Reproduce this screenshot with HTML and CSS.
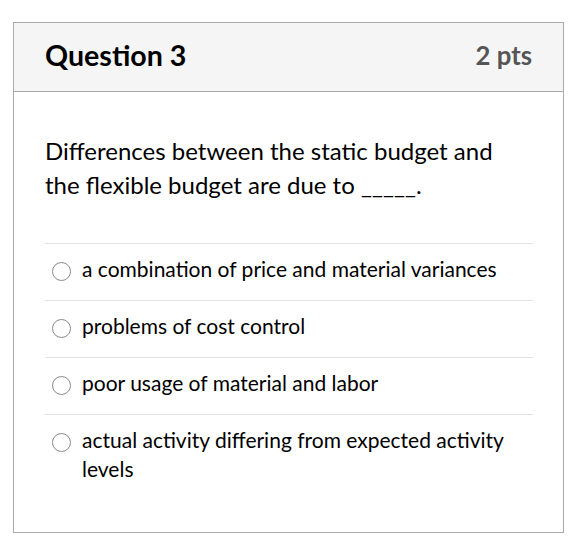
FILE: index.html
```html
<!DOCTYPE html>
<html>
<head>
<meta charset="utf-8">
<link rel="stylesheet" href="styles.css">
</head>
<body>
<div class="card">
  <div class="header">
    <h2 class="title">Question 3</h2>
    <div class="pts">2 pts</div>
  </div>
  <div class="content">
    <p class="question">Differences between the static budget and the flexible budget are due to _____.</p>
    <div class="answers">
      <label class="answer"><span class="radio"></span><span class="text">a combination of price and material variances</span></label>
      <label class="answer"><span class="radio"></span><span class="text">problems of cost control</span></label>
      <label class="answer"><span class="radio"></span><span class="text">poor usage of material and labor</span></label>
      <label class="answer"><span class="radio"></span><span class="text">actual activity differing from expected activity levels</span></label>
    </div>
  </div>
</div>
</body>
</html>
```
FILE: styles.css
```css
html, body {
  margin: 0;
  padding: 0;
  background: #fff;
}
body {
  font-family: Lato, "Liberation Sans", sans-serif;
  color: #000;
  padding: 22px 0 0 13px;
}
.card {
  width: 549px;
  height: 509px;
  border: 1px solid #aaaaaa;
}
.header {
  background: #f5f5f5;
  border-bottom: 1px solid #aaaaaa;
  height: 63px;
  display: flex;
  align-items: center;
  justify-content: space-between;
  padding: 0 31px 5px 31px;
}
.title {
  margin: 0;
  font-size: 28.6px;
  font-weight: 700;
  color: #000;
}
.pts {
  font-size: 25.7px;
  font-weight: 700;
  color: #555;
}
.content {
  padding: 42px 30px 0 31px;
}
.question {
  margin: 0 0 41px 0;
  font-size: 24px;
  line-height: 34px;
  color: #000;
}
.answer {
  display: flex;
  align-items: flex-start;
  border-top: 1px solid #e2e2e2;
  padding: 10px 0 17px 7px;
  font-size: 21px;
  line-height: 29px;
  color: #000;
}
.radio {
  flex: none;
  width: 17px;
  height: 17px;
  border: 1px solid #8a8a8a;
  border-radius: 50%;
  margin: 8px 11px 0 0;
}
```
